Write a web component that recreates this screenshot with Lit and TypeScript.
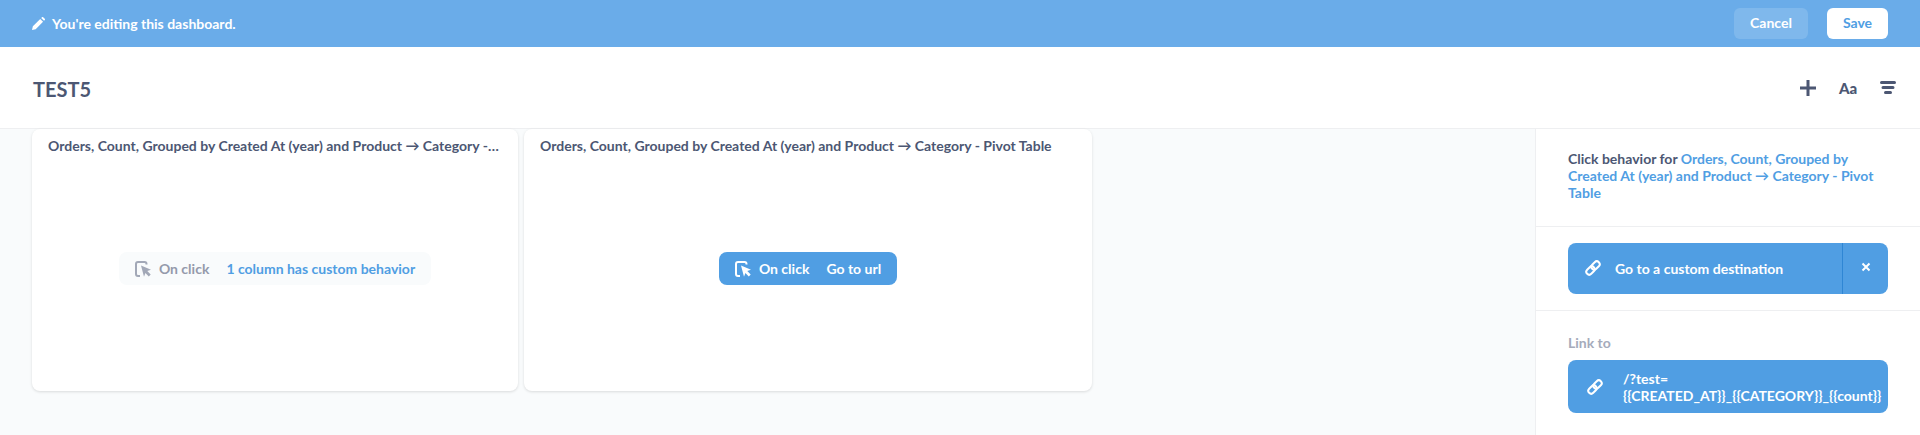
import { LitElement, css, html, svg } from 'lit'
import { customElement } from 'lit/decorators.js'

const linkIcon = svg`
  <rect x="0.8" y="7.600" width="9.400" height="5.800" rx="2.900" transform="rotate(-45 5.500 10.500)" fill="none" stroke="currentColor" stroke-width="2"/>
  <rect x="5.800" y="2.600" width="9.400" height="5.800" rx="2.900" transform="rotate(-45 10.500 5.500)" fill="none" stroke="currentColor" stroke-width="2"/>`

const clickIcon = svg`
  <path d="M5 15H3a2 2 0 0 1-2-2V3a2 2 0 0 1 2-2h6.500a2 2 0 0 1 2 2v.500" fill="none" stroke="currentColor" stroke-width="2"/>
  <path d="M6 4.500l10 4.200-3.700 1.400 3.400 3.400-1.900 1.900-3.400-3.400-1.400 3.800z" fill="currentColor"/>`

@customElement('app-root')
export class AppRoot extends LitElement {
  static styles = css`
    :host {
      display: block;
      height: 435px;
      overflow: hidden;
      font-family: Lato, 'Noto Sans', sans-serif;
      color: #4c5773;
      background: #f9fbfc;
    }

    .banner {
      height: 47px;
      box-sizing: border-box;
      background: #6aace9;
      color: #fff;
      display: flex;
      align-items: center;
      padding: 0 32px;
      font-size: 14px;
      font-weight: 700;
    }
    .banner svg { margin-right: 7px; }
    .banner .actions { margin-left: auto; display: flex; gap: 19px; }
    .btn {
      height: 31px;
      display: flex;
      align-items: center;
      justify-content: center;
      border-radius: 6px;
      box-sizing: border-box;
      padding-bottom: 2px;
      font-size: 14px;
      font-weight: 700;
    }
    .btn.cancel { width: 74px; background: #7fb8ec; color: #fff; }
    .btn.save { width: 61px; background: #fff; color: #509ee3; }

    .header {
      height: 82px;
      box-sizing: border-box;
      background: #fff;
      border-bottom: 1px solid #eeeff1;
      display: flex;
      align-items: center;
      padding: 0 24px 0 33px;
    }
    .header h1 { margin: 2px 0 0; font-size: 20px; font-weight: 700; line-height: 1; }
    .tools { margin-left: auto; display: flex; align-items: center; gap: 22px; }
    .tools .aa { font-size: 15px; font-weight: 900; width: 20px; text-align: center; }
    .tools svg { display: block; }

    .body { display: flex; height: 306px; }
    .grid {
      flex: 1;
      display: flex;
      gap: 6px;
      padding: 0 0 0 32px;
      align-items: flex-start;
    }
    .card {
      height: 262px;
      box-sizing: border-box;
      background: #fff;
      border-radius: 8px;
      box-shadow: 0 1px 3px rgba(0, 0, 0, 0.13);
      display: flex;
      flex-direction: column;
      padding: 8px 16px 0 16px;
    }
    .card.one { width: 486px; }
    .card.two { width: 568px; }
    .card-title {
      font-size: 14px;
      font-weight: 700;
      line-height: 17px;
      white-space: nowrap;
      overflow: hidden;
      text-overflow: ellipsis;
    }
    .card-center { flex: 1; display: flex; align-items: center; justify-content: center; padding-bottom: 8px; }
    .pill {
      height: 33px;
      box-sizing: border-box;
      border-radius: 8px;
      display: flex;
      align-items: center;
      padding: 0 16px;
      font-size: 14px;
      font-weight: 700;
    }
    .pill svg { margin-right: 8px; }
    .pill .value { margin-left: 17px; }
    .pill.idle { background: #f9fbfc; color: #949aab; }
    .pill.idle svg { opacity: 0.85; }
    .pill.idle .value { color: #509ee3; }
    .pill.active { background: #509ee3; color: #fff; }

    .sidebar {
      width: 385px;
      box-sizing: border-box;
      background: #fff;
      border-left: 1px solid #eeeff1;
      flex: none;
    }
    .section { padding: 0 32px; border-bottom: 1px solid #eeeff1; box-sizing: border-box; }
    .section.head {
      height: 98px;
      padding-top: 21px;
      font-size: 14px;
      font-weight: 700;
      line-height: 17px;
    }
    .section.head span { color: #509ee3; }
    .section.dest { height: 84px; padding-top: 16px; }
    .section.link { border: 0; padding-top: 23px; }
    .dest-btn {
      height: 51px;
      border-radius: 8px;
      background: #509ee3;
      color: #fff;
      display: flex;
      align-items: stretch;
      font-size: 14px;
      font-weight: 700;
    }
    .dest-main { flex: 1; display: flex; align-items: center; padding: 0 0 1px 17px; gap: 14px; }
    .dest-x { width: 45px; border-left: 1px solid #2f86d4; display: flex; align-items: center; justify-content: center; padding-bottom: 4px; }
    .link-label { font-size: 14px; font-weight: 700; color: #a5abbb; line-height: 17px; margin-bottom: 9px; }
    .link-btn {
      height: 53px;
      border-radius: 8px;
      background: #509ee3;
      color: #fff;
      display: flex;
      align-items: center;
      padding-left: 19px;
      gap: 20px;
      font-size: 14px;
      font-weight: 700;
      line-height: 17px;
    }
    .link-btn svg { flex: none; }
  `

  render() {
    return html`
      <div class="banner">
        <svg width="13" height="13" viewBox="0 0 12 12"><path d="M0 12l.8-3.400L7.600 1.800l2.600 2.600-6.800 6.800zM8.500.9l.7-.7a.8.8 0 0 1 1.100 0l1.500 1.500a.8.8 0 0 1 0 1.100l-.7.7z" fill="currentColor"/></svg>
        <span>You're editing this dashboard.</span>
        <div class="actions">
          <div class="btn cancel">Cancel</div>
          <div class="btn save">Save</div>
        </div>
      </div>
      <div class="header">
        <h1>TEST5</h1>
        <div class="tools">
          <svg width="16" height="16" viewBox="0 0 16 16"><path d="M8 0v16M0 8h16" stroke="currentColor" stroke-width="3"/></svg>
          <span class="aa">Aa</span>
          <svg width="16" height="13" viewBox="0 0 16 13"><path d="M1.500 1.500h13M3 6.500h10M5.500 11.500h5" stroke="currentColor" stroke-width="3" stroke-linecap="round"/></svg>
        </div>
      </div>
      <div class="body">
        <div class="grid">
          <div class="card one">
            <div class="card-title">Orders, Count, Grouped by Created At (year) and Product → Category - Pivot Table</div>
            <div class="card-center">
              <div class="pill idle">
                <svg width="16" height="16" viewBox="0 0 16 16">${clickIcon}</svg>
                <span>On click</span><span class="value">1 column has custom behavior</span>
              </div>
            </div>
          </div>
          <div class="card two">
            <div class="card-title">Orders, Count, Grouped by Created At (year) and Product → Category - Pivot Table</div>
            <div class="card-center">
              <div class="pill active">
                <svg width="16" height="16" viewBox="0 0 16 16">${clickIcon}</svg>
                <span>On click</span><span class="value">Go to url</span>
              </div>
            </div>
          </div>
        </div>
        <div class="sidebar">
          <div class="section head">Click behavior for <span>Orders, Count, Grouped by Created At (year) and Product → Category - Pivot Table</span></div>
          <div class="section dest">
            <div class="dest-btn">
              <div class="dest-main">
                <svg width="16" height="16" viewBox="0 0 16 16">${linkIcon}</svg>
                <span>Go to a custom destination</span>
              </div>
              <div class="dest-x">
                <svg width="10" height="10" viewBox="0 0 10 10"><path d="M1.500 1.500l7 7M8.500 1.500l-7 7" stroke="currentColor" stroke-width="2"/></svg>
              </div>
            </div>
          </div>
          <div class="section link">
            <div class="link-label">Link to</div>
            <div class="link-btn">
              <svg width="16" height="16" viewBox="0 0 16 16">${linkIcon}</svg>
              <span>/?test=<br />{{CREATED_AT}}_{{CATEGORY}}_{{count}}</span>
            </div>
          </div>
        </div>
      </div>
    `
  }
}
